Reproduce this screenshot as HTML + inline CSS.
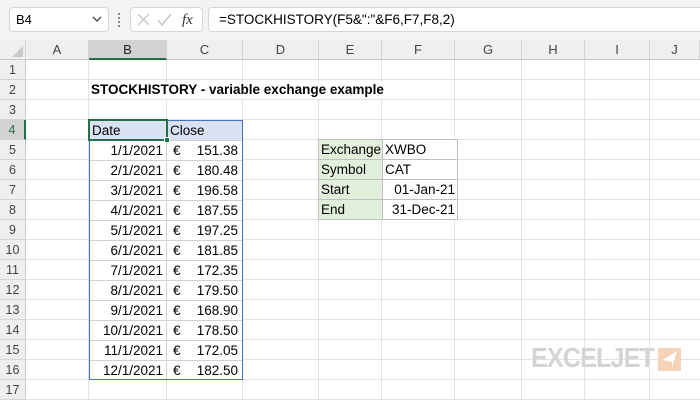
<!DOCTYPE html><html><head><style>
*{margin:0;padding:0;box-sizing:border-box}
body{width:700px;height:400px;overflow:hidden;background:#fff;font-family:"Liberation Sans",Calibri,sans-serif;font-size:13px;color:#000;position:relative}
.a{position:absolute}
.top{left:0;top:0;width:700px;height:40px;background:#f3f3f3}
.box{background:#fff;border:1px solid #d6d6d6;border-radius:4px}
.ch{top:40px;height:20px;background:#efefef;border-right:1px solid #d4d4d4;border-bottom:1px solid #c8c8c8;text-align:center;line-height:20px;color:#444;font-size:13px}
.rh{left:0;width:26px;height:20px;background:#efefef;border-bottom:1px solid #d4d4d4;border-right:1px solid #c8c8c8;text-align:center;line-height:20px;color:#444;font-size:12.5px}
.vl{top:60px;width:1px;height:340px;background:#e2e2e2}
.hl{left:26px;width:674px;height:1px;background:#e2e2e2}
.c{height:20px;line-height:20px;padding:0 4px;white-space:nowrap;background:#fff}
</style></head><body>
<div class="a top"></div>
<div class="a box" style="left:9px;top:7px;width:100px;height:25px"></div>
<div class="a" style="left:16px;top:12px;font-size:13px">B4</div>
<svg class="a" style="left:92px;top:16px" width="10" height="7"><path d="M1 1l4 4 4-4" stroke="#444" fill="none" stroke-width="1.3"/></svg>
<div class="a" style="left:118px;top:13px;width:2px;height:14px;border-left:2px dotted #888"></div>
<div class="a box" style="left:130px;top:7px;width:73px;height:25px"></div>
<svg class="a" style="left:137px;top:12px" width="60" height="16"><path d="M1 2l11 11M12 2L1 13" stroke="#bbb" stroke-width="1.2"/><path d="M21 8l4 5 9-11" stroke="#bbb" fill="none" stroke-width="1.2"/><text x="45" y="12" font-family="Liberation Serif" font-style="italic" font-size="15" fill="#333">fx</text></svg>
<div class="a box" style="left:208px;top:7px;width:500px;height:25px"></div>
<div class="a" style="left:219px;top:12px;font-size:13.5px">=STOCKHISTORY(F5&amp;":"&amp;F6,F7,F8,2)</div>

<div class="a ch" style="left:0;width:26px;background:#efefef"></div>
<svg class="a" style="left:12px;top:46px" width="12" height="12"><path d="M11 0V11H0Z" fill="#c8c8c8"/></svg>
<div class="a ch" style="left:26px;width:63px">A</div>
<div class="a ch" style="left:89px;width:78px;background:#d2d2d2;border-bottom:2px solid #217346;color:#222">B</div>
<div class="a ch" style="left:167px;width:76px">C</div>
<div class="a ch" style="left:243px;width:76px">D</div>
<div class="a ch" style="left:319px;width:63px">E</div>
<div class="a ch" style="left:382px;width:73px">F</div>
<div class="a ch" style="left:455px;width:67px">G</div>
<div class="a ch" style="left:522px;width:63px">H</div>
<div class="a ch" style="left:585px;width:65px">I</div>
<div class="a ch" style="left:650px;width:50px">J</div>

<div class="a vl" style="left:88px"></div><div class="a vl" style="left:166px"></div><div class="a vl" style="left:242px"></div><div class="a vl" style="left:318px"></div><div class="a vl" style="left:381px"></div><div class="a vl" style="left:454px"></div><div class="a vl" style="left:521px"></div><div class="a vl" style="left:584px"></div><div class="a vl" style="left:649px"></div>

<div id="rows"></div>
<script>
var h='';for(var i=1;i<=17;i++){var y=60+(i-1)*20;h+='<div class="a hl" style="top:'+(y+19)+'px"></div><div class="a rh" style="top:'+y+'px;'+(i==4?'background:#d2d2d2;border-right:2px solid #217346;color:#217346':'')+'">'+i+'</div>';}
document.getElementById('rows').innerHTML=h;
</script>
<div class="a" style="left:91px;top:82px;font-weight:bold;font-size:13.5px;background:#fff;width:300px;height:17px">STOCKHISTORY - variable exchange example</div>

<div class="a" style="left:89px;top:120px;width:154px;height:260px;border:1px solid #4472c4;background:#fff"></div>
<div id="t"></div>
<script>
var d=[["1/1/2021","151.38"],["2/1/2021","180.48"],["3/1/2021","196.58"],["4/1/2021","187.55"],["5/1/2021","197.25"],["6/1/2021","181.85"],["7/1/2021","172.35"],["8/1/2021","179.50"],["9/1/2021","168.90"],["10/1/2021","178.50"],["11/1/2021","172.05"],["12/1/2021","182.50"]];
var h='<div class="a c" style="left:90px;top:121px;width:152px;height:19px;background:#d9e1f2;line-height:19px"></div><div class="a" style="left:92px;top:121px;line-height:19px;font-size:13.5px">Date</div><div class="a" style="left:170px;top:121px;line-height:19px;font-size:13.5px">Close</div><div class="a" style="left:166px;top:121px;width:1px;height:258px;background:#d0d0d0"></div>';
for(var i=0;i<12;i++){var y=140+i*20;h+='<div class="a" style="left:90px;top:'+y+'px;width:152px;height:1px;background:'+(i==0?'#d0d0d0':'#d0d0d0')+'"></div><div class="a" style="left:90px;top:'+(y+1)+'px;width:73px;text-align:right;line-height:19px;font-size:13.5px">'+d[i][0]+'</div><div class="a" style="left:173px;top:'+(y+1)+'px;line-height:19px;font-size:13.5px">€</div><div class="a" style="left:180px;top:'+(y+1)+'px;width:58px;text-align:right;line-height:19px;font-size:13.5px">'+d[i][1]+'</div>';}
document.getElementById('t').innerHTML=h;
</script>
<div class="a" style="left:88px;top:119px;width:80px;height:22px;border:2px solid #217346"></div>
<div class="a" style="left:164px;top:137px;width:6px;height:6px;background:#217346;border:1px solid #fff"></div>

<div class="a" style="left:318px;top:139px;width:140px;height:81px;border:1px solid #bfbfbf;background:#fff"></div>
<div class="a" style="left:319px;top:140px;width:63px;height:79px;background:#e2efda"></div>
<div class="a" style="left:382px;top:140px;width:1px;height:79px;background:#bfbfbf"></div>
<div class="a" style="left:319px;top:159px;width:138px;height:1px;background:#bfbfbf"></div>
<div class="a" style="left:319px;top:179px;width:138px;height:1px;background:#bfbfbf"></div>
<div class="a" style="left:319px;top:199px;width:138px;height:1px;background:#bfbfbf"></div>
<div class="a" style="left:321px;top:140px;line-height:19px;font-size:13.5px">Exchange</div>
<div class="a" style="left:321px;top:160px;line-height:19px;font-size:13.5px">Symbol</div>
<div class="a" style="left:321px;top:180px;line-height:19px;font-size:13.5px">Start</div>
<div class="a" style="left:321px;top:200px;line-height:19px;font-size:13.5px">End</div>
<div class="a" style="left:385px;top:140px;line-height:19px;font-size:13.5px">XWBO</div>
<div class="a" style="left:385px;top:160px;line-height:19px;font-size:13.5px">CAT</div>
<div class="a" style="left:383px;top:180px;width:72px;text-align:right;line-height:19px;font-size:13.5px">01-Jan-21</div>
<div class="a" style="left:383px;top:200px;width:72px;text-align:right;line-height:19px;font-size:13.5px">31-Dec-21</div>

<div class="a" style="left:531px;top:343px;font-weight:bold;font-size:28px;color:#d4d4d4;letter-spacing:-1px;transform:scaleX(0.9);transform-origin:left;line-height:30px">EXCELJET</div>
<svg class="a" style="left:658px;top:348px" width="23" height="23"><rect width="23" height="23" fill="#f6d3b8"/><path d="M19 3L5 12l9 2 0 6z" fill="#fff"/></svg>
</body></html>
